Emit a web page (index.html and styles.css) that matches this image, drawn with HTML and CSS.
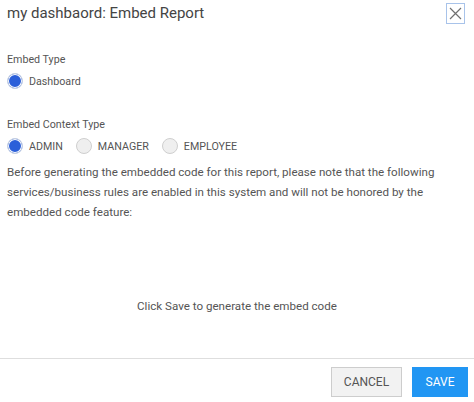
FILE: index.html
```html
<!DOCTYPE html>
<html>
<head>
<meta charset="utf-8">
<link rel="stylesheet" href="styles.css">
</head>
<body>
<div class="dialog">
  <div class="header">
    <div class="title">my dashbaord: Embed Report</div>
    <button class="close" aria-label="Close">
      <svg width="13" height="13" viewBox="0 0 13 13"><path d="M1 1L12 12M12 1L1 12" stroke="#707070" stroke-width="1.2" fill="none"/></svg>
    </button>
  </div>
  <div class="body">
    <div class="group first">
      <div class="label">Embed Type</div>
      <div class="radios">
        <label class="radio"><span class="dot on"></span><span>Dashboard</span></label>
      </div>
    </div>
    <div class="group">
      <div class="label">Embed Context Type</div>
      <div class="radios">
        <label class="radio"><span class="dot on"></span><span>ADMIN</span></label>
        <label class="radio"><span class="dot"></span><span>MANAGER</span></label>
        <label class="radio"><span class="dot"></span><span>EMPLOYEE</span></label>
      </div>
    </div>
    <p class="note">Before generating the embedded code for this report, please note that the following services/business rules are enabled in this system and will not be honored by the embedded code feature:</p>
    <div class="hint">Click Save to generate the embed code</div>
  </div>
  <div class="footer">
    <button class="btn cancel">CANCEL</button>
    <button class="btn save">SAVE</button>
  </div>
</div>
</body>
</html>
```
FILE: styles.css
```css
html, body {
  margin: 0;
  padding: 0;
  background: #fff;
}
.dialog {
  width: 474px;
  height: 402px;
  display: flex;
  flex-direction: column;
  font-family: Roboto, "Liberation Sans", sans-serif;
  color: #555;
}
.header {
  display: flex;
  justify-content: space-between;
  align-items: flex-start;
  padding: 2px 9px 0 7px;
  height: 30px;
  box-sizing: border-box;
}
.title {
  font-size: 15px;
  line-height: 22px;
  color: #444;
}
.close {
  width: 19px;
  height: 21px;
  margin-top: 1px;
  padding: 0;
  border: 1px solid #a8c3ea;
  background: #fff;
  display: flex;
  align-items: center;
  justify-content: center;
}
.body {
  flex: 1;
  padding: 0 7px;
}
.group.first {
  margin-top: 23px;
}
.group {
  margin-top: 28px;
}
.label {
  font-size: 10.7px;
  line-height: 14px;
  color: #555;
}
.radios {
  display: flex;
  gap: 13px;
  margin-top: 5px;
}
.radio {
  display: flex;
  align-items: center;
  gap: 6px;
  font-size: 10.7px;
  color: #555;
  height: 18px;
}
.dot {
  width: 14px;
  height: 14px;
  border-radius: 50%;
  border: 1px solid #cfcfcf;
  background: #efefef;
  box-sizing: content-box;
}
.dot.on {
  background: #2b5fd9;
  box-shadow: inset 0 0 0 1px #fff;
  border-color: #c9d2e2;
}
.note {
  margin: 6.5px 0 0;
  font-size: 11.6px;
  line-height: 20px;
  color: #555;
}
.hint {
  margin-top: 77px;
  text-align: center;
  font-size: 11.6px;
  color: #555;
}
.footer {
  border-top: 1px solid #dedede;
  display: flex;
  justify-content: flex-end;
  gap: 10px;
  padding: 8px 6px 5px;
  height: 44px;
  box-sizing: border-box;
}
.btn {
  height: 30px;
  font-family: Roboto, "Liberation Sans", sans-serif;
  font-size: 12px;
  padding: 0;
  cursor: pointer;
}
.cancel {
  width: 71px;
  background: #f2f2f2;
  border: 1px solid #cdcdcd;
  color: #555;
}
.save {
  width: 56px;
  background: #2196f3;
  border: 1px solid #2196f3;
  color: #fff;
}
```
